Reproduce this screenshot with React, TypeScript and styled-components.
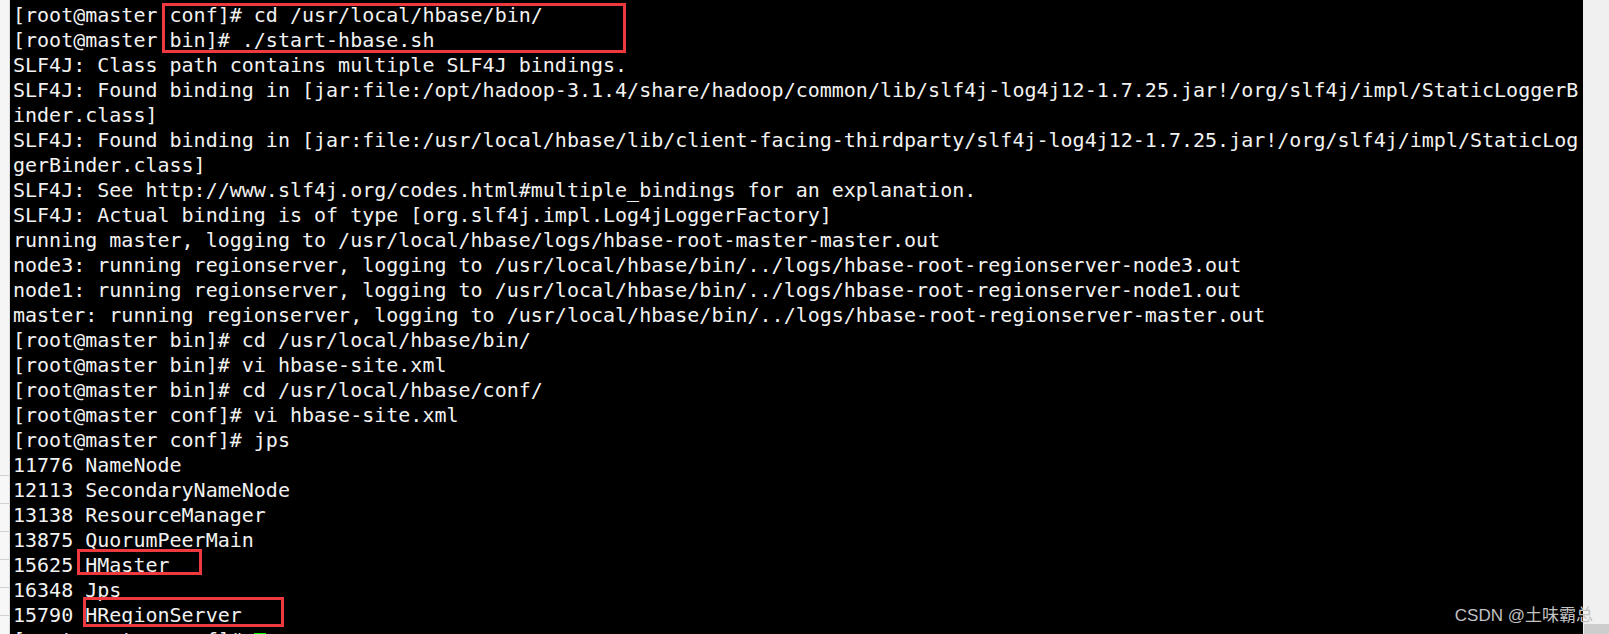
import React from "react";
import styled, { createGlobalStyle } from "styled-components";

const GlobalStyle = createGlobalStyle`
  html, body {
    margin: 0;
    padding: 0;
    background: #000;
    overflow: hidden;
  }
`;

const Page = styled.div`
  display: flex;
  width: 1609px;
  height: 634px;
  overflow: hidden;
  position: relative;
`;

const Gutter = styled.div`
  width: 9px;
  flex: none;
  display: flex;
  flex-direction: column;
  background: #f3f3f3;
  border-right: 1px solid #dcdcdc;
`;

const GutterTop = styled.div`
  height: 475px;
  flex: none;
  background: #f5f5f5;
`;

const GutterRow = styled.div`
  height: 27px;
  flex: none;
  border-top: 1px solid #d2d2d2;
  background: #f7f7f7;
`;

const Terminal = styled.div`
  flex: 1;
  position: relative;
  background: #000;
  padding: 3px 0 0 3px;
  font-family: "DejaVu Sans Mono", "Liberation Mono", monospace;
  font-size: 20px;
  line-height: 25px;
  color: #f2f2f2;
  overflow: hidden;
`;

const Line = styled.div`
  height: 25px;
  white-space: pre;
`;

const Cursor = styled.span`
  display: inline-block;
  width: 12px;
  height: 22px;
  background: #00ff00;
  vertical-align: -8px;
`;

const RedBox = styled.div<{ $l: number; $t: number; $w: number; $h: number }>`
  position: absolute;
  left: ${(p) => p.$l}px;
  top: ${(p) => p.$t}px;
  width: ${(p) => p.$w}px;
  height: ${(p) => p.$h}px;
  box-sizing: border-box;
  border: 3px solid #ee3a3e;
`;

const RightStrip = styled.div`
  width: 26px;
  flex: none;
  display: flex;
  flex-direction: column;
  justify-content: flex-end;
  background: #f0f0f0;
`;

const ScrollCorner = styled.div`
  height: 10px;
  margin-left: 1px;
  background: #cdcdcd;
`;

const Watermark = styled.div`
  position: absolute;
  right: 16px;
  top: 606px;
  font-family: "Liberation Sans", "Noto Sans CJK SC", sans-serif;
  font-size: 17px;
  line-height: 20px;
  color: #c2c2c2;
  white-space: nowrap;
`;

const lines: string[] = [
  "[root@master conf]# cd /usr/local/hbase/bin/",
  "[root@master bin]# ./start-hbase.sh",
  "SLF4J: Class path contains multiple SLF4J bindings.",
  "SLF4J: Found binding in [jar:file:/opt/hadoop-3.1.4/share/hadoop/common/lib/slf4j-log4j12-1.7.25.jar!/org/slf4j/impl/StaticLoggerB",
  "inder.class]",
  "SLF4J: Found binding in [jar:file:/usr/local/hbase/lib/client-facing-thirdparty/slf4j-log4j12-1.7.25.jar!/org/slf4j/impl/StaticLog",
  "gerBinder.class]",
  "SLF4J: See http://www.slf4j.org/codes.html#multiple_bindings for an explanation.",
  "SLF4J: Actual binding is of type [org.slf4j.impl.Log4jLoggerFactory]",
  "running master, logging to /usr/local/hbase/logs/hbase-root-master-master.out",
  "node3: running regionserver, logging to /usr/local/hbase/bin/../logs/hbase-root-regionserver-node3.out",
  "node1: running regionserver, logging to /usr/local/hbase/bin/../logs/hbase-root-regionserver-node1.out",
  "master: running regionserver, logging to /usr/local/hbase/bin/../logs/hbase-root-regionserver-master.out",
  "[root@master bin]# cd /usr/local/hbase/bin/",
  "[root@master bin]# vi hbase-site.xml",
  "[root@master bin]# cd /usr/local/hbase/conf/",
  "[root@master conf]# vi hbase-site.xml",
  "[root@master conf]# jps",
  "11776 NameNode",
  "12113 SecondaryNameNode",
  "13138 ResourceManager",
  "13875 QuorumPeerMain",
  "15625 HMaster",
  "16348 Jps",
  "15790 HRegionServer",
];

export default function App() {
  return (
    <>
      <GlobalStyle />
      <Page>
        <Gutter>
          <GutterTop />
          {[0, 1, 2, 3, 4, 5].map((i) => (
            <GutterRow key={i} />
          ))}
        </Gutter>
        <Terminal>
          {lines.map((l, i) => (
            <Line key={i}>{l}</Line>
          ))}
          <Line>
            {"[root@master conf]# "}
            <Cursor />
          </Line>
          <RedBox $l={152} $t={3} $w={464} $h={50} />
          <RedBox $l={67} $t={549} $w={125} $h={26} />
          <RedBox $l={73} $t={597} $w={201} $h={30} />
        </Terminal>
        <RightStrip>
          <ScrollCorner />
        </RightStrip>
        <Watermark>CSDN @土味霸总</Watermark>
      </Page>
    </>
  );
}
